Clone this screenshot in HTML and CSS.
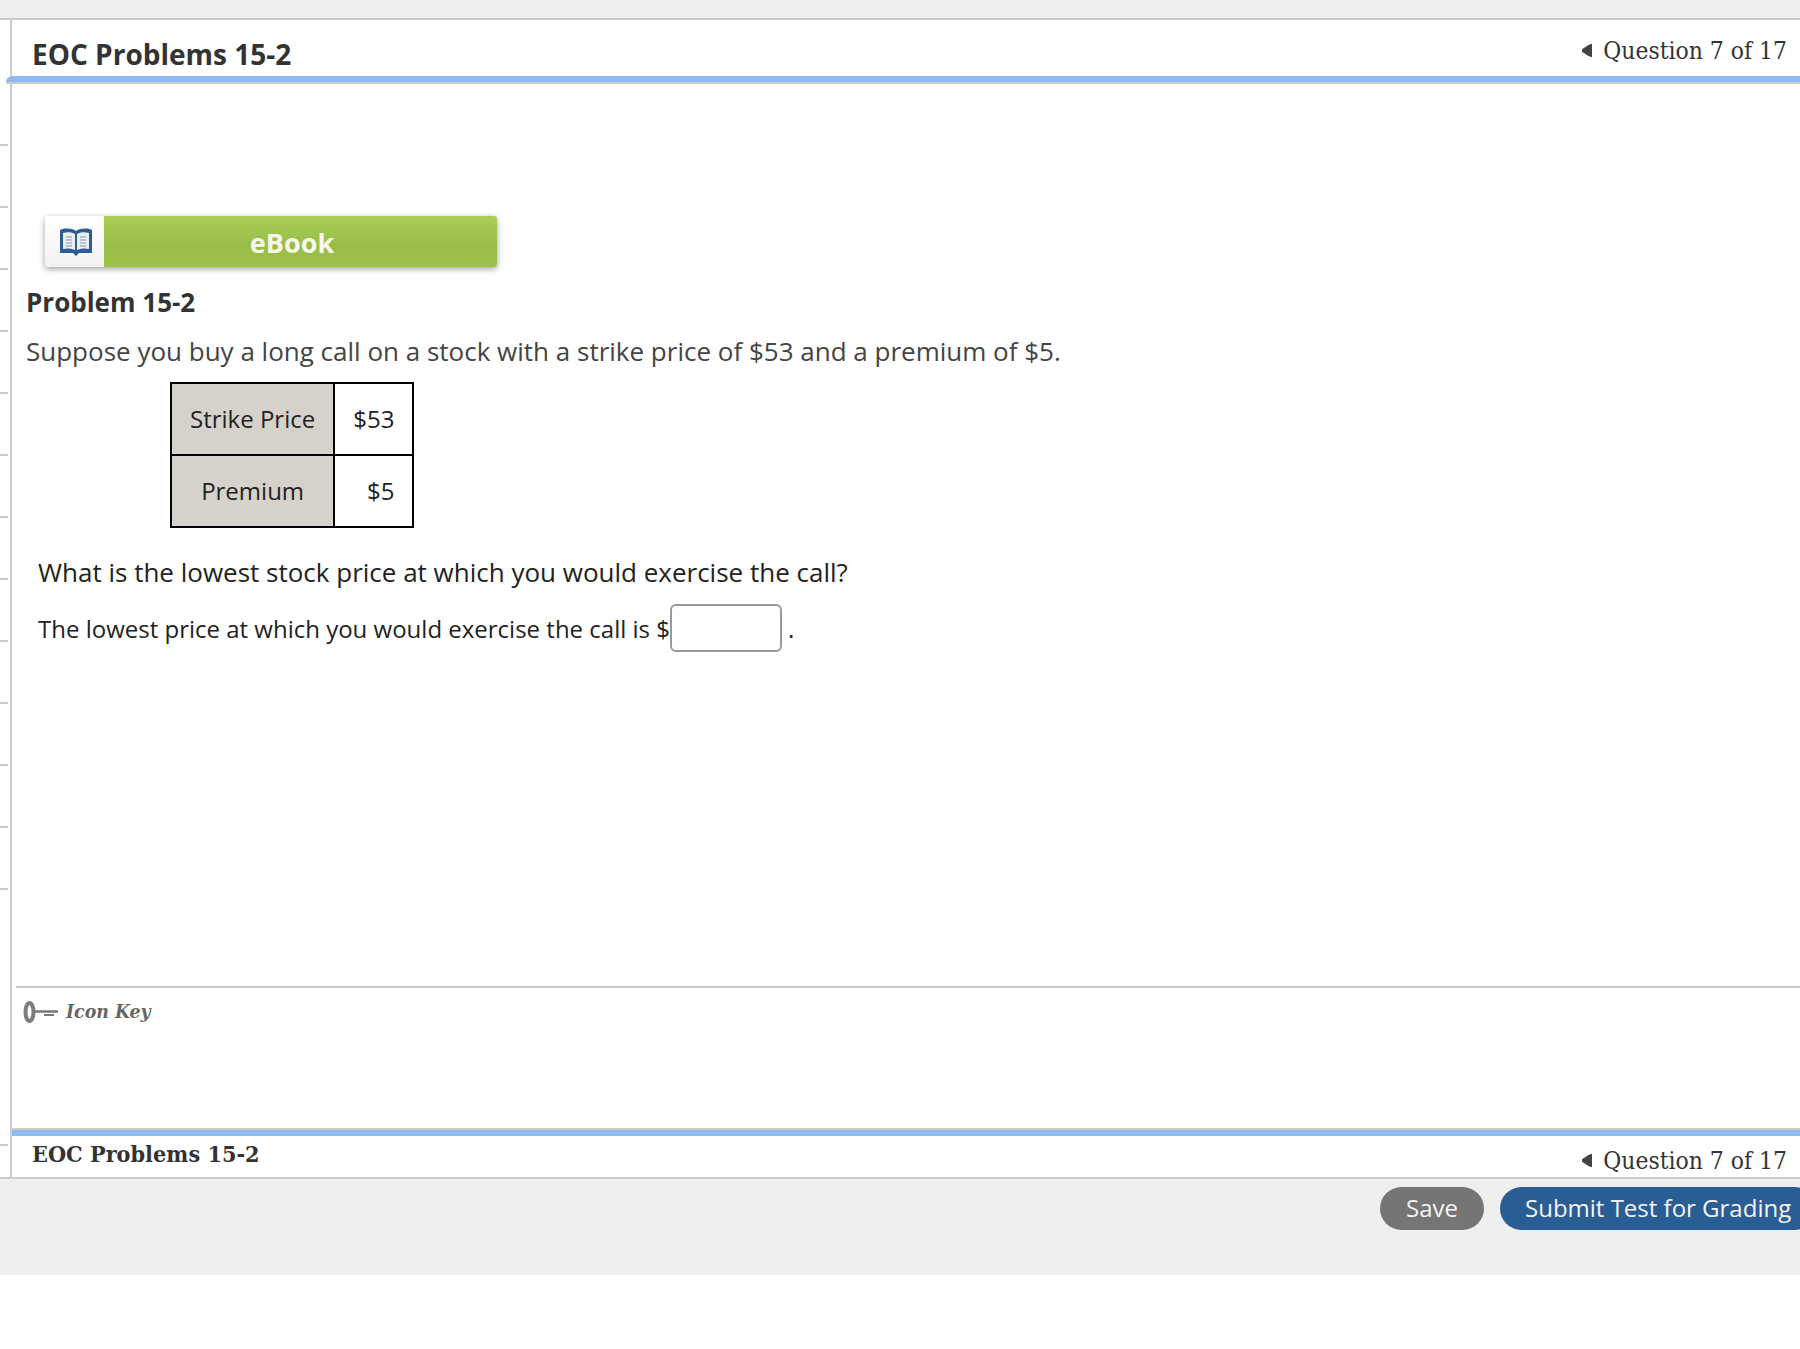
FILE: index.html
```html
<!DOCTYPE html>
<html lang="en">
<head>
<meta charset="utf-8">
<title>EOC Problems 15-2</title>
<link rel="stylesheet" href="styles.css">
</head>
<body>
<div class="page">
  <div class="band-top"></div>
  <div class="shell">
    <div class="rail">
      <i class="tick"></i><i class="tick"></i><i class="tick"></i><i class="tick"></i><i class="tick"></i>
      <i class="tick"></i><i class="tick"></i><i class="tick"></i><i class="tick"></i><i class="tick"></i>
      <i class="tick"></i><i class="tick"></i><i class="tick"></i>
      <i class="tick tick-last"></i>
    </div>
    <div class="main">
      <header class="head">
        <h1 class="title">EOC Problems 15-2</h1>
        <div class="qnav">
          <svg class="arrow" viewBox="0 0 11 15" width="10" height="15"><path d="M11 0V15L7 13.500L0 9V6L7 1.500Z"/></svg>
          <span>Question 7 of 17</span>
        </div>
      </header>
      <div class="rule-blue rule-head"></div>
      <section class="content">
        <div class="ebook">
          <span class="ebook-icon">
            <svg class="book" viewBox="0 0 34 30" width="34" height="30">
              <path d="M1 3c5-2 11-2 16 1 5-3 11-3 16-1v23H20l-3 3-3-3H1z" fill="#2b5c96"/>
              <path d="M4 6c4-1.500 9-1 12 1V23c-3-1.500-8-2-12-1z" fill="#eaeef3"/>
              <path d="M30 6c-4-1.500-9-1-12 1V23c3-1.500 8-2 12-1z" fill="#eaeef3"/>
              <path d="M7 10h6M7 13h6M7 16h6M7 19h6M21 10h6M21 13h6M21 16h6M21 19h6" stroke="#aab4c1" stroke-width="1.500" fill="none"/>
            </svg>
          </span>
          <span class="ebook-label">eBook</span>
        </div>
        <h2 class="problem">Problem 15-2</h2>
        <p class="intro">Suppose you buy a long call on a stock with a strike price of $53 and a premium of $5.</p>
        <table class="data">
          <tr><th>Strike Price</th><td>$53</td></tr>
          <tr><th>Premium</th><td>$5</td></tr>
        </table>
        <p class="ask">What is the lowest stock price at which you would exercise the call?</p>
        <p class="answer">The lowest price at which you would exercise the call is $<input class="field" type="text" aria-label="Lowest price"><span class="period">.</span></p>
      </section>
      <section class="key">
        <svg class="key-icon" viewBox="0 0 36 24" width="36" height="24">
          <ellipse cx="6.500" cy="11" rx="4" ry="9" fill="none" stroke="#7d7d7d" stroke-width="4"/>
          <path d="M12 10.500h23" stroke="#777" stroke-width="2.500"/>
          <path d="M21 14h10" stroke="#777" stroke-width="2"/>
        </svg>
        <span class="key-label">Icon Key</span>
      </section>
      <div class="rule-blue rule-foot"></div>
      <footer class="foot">
        <div class="foot-title">EOC Problems 15-2</div>
        <div class="qnav qnav-foot">
          <svg class="arrow" viewBox="0 0 11 15" width="10" height="15"><path d="M11 0V15L7 13.500L0 9V6L7 1.500Z"/></svg>
          <span>Question 7 of 17</span>
        </div>
      </footer>
    </div>
  </div>
  <div class="actions">
    <button class="btn btn-save" type="button">Save</button>
    <button class="btn btn-submit" type="button">Submit Test for Grading</button>
  </div>
</div>
</body>
</html>
```
FILE: styles.css
```css
* { box-sizing: border-box; }
html, body { margin: 0; padding: 0; background: #fff; }
body { font-family: "Open Sans", "Noto Sans", sans-serif; color: #333; }
.page { width: 1800px; height: 1349px; overflow: hidden; }

.band-top { height: 18px; background: #efefef; }

.shell {
  display: flex;
  height: 1161px;
  border-top: 2px solid #ccc;
  border-bottom: 2px solid #ccc;
}

.rail {
  width: 10px;
  flex: none;
  display: flex;
  flex-direction: column;
  gap: 60px;
  padding-top: 124px;
}
.tick { display: block; width: 8px; height: 2px; background: #ccc; flex: none; }
.tick-last { margin-top: 194px; }

.main {
  flex: 1;
  min-width: 0;
  display: flex;
  flex-direction: column;
  border-left: 2px solid #ccc;
}

.head {
  height: 56px;
  flex: none;
  display: flex;
  justify-content: space-between;
  padding: 0 13px 0 20px;
}
.title { margin: 0; padding-top: 16px; font-size: 28px; line-height: 36px; font-weight: 700; color: #333; }

.qnav {
  display: flex;
  align-items: center;
  gap: 11px;
  height: 36px;
  margin-top: 12px;
  font-family: "DejaVu Serif Condensed", "DejaVu Serif", serif;
  font-size: 24.400px;
  color: #333;
}
.arrow { fill: #444; flex: none; }

.rule-blue { flex: none; background: #8fbaf0; }
.rule-head {
  height: 8px;
  margin-left: -6px;
  border-bottom: 2px solid #ccc;
  border-top-left-radius: 6px;
}
.rule-foot { height: 8px; border-top: 2px solid #ccc; }

.content { height: 904px; flex: none; padding: 132px 0 0 9px; border-bottom: 2px solid #ccc; margin-left: 4px; }

.ebook {
  display: flex;
  width: 452px;
  height: 51px;
  margin-left: 20px;
  border-radius: 3px;
  box-shadow: 0 2px 6px rgba(0, 0, 0, 0.38);
}
.ebook-icon {
  width: 59px;
  flex: none;
  display: flex;
  align-items: center;
  justify-content: center;
  padding-left: 2px;
  background: linear-gradient(#fff, #f2f2f2);
  border-radius: 3px 0 0 3px;
}
.book { filter: blur(0.6px); }
.ebook-label {
  flex: 1;
  display: flex;
  align-items: center;
  justify-content: center;
  padding: 2px 17px 0 0;
  font-size: 27px;
  font-weight: 700;
  color: #f7f9ee;
  background: linear-gradient(#a9cf57, #98bd47 60%, #9dc24a);
  border-radius: 0 3px 3px 0;
}

.problem { margin: 18px 0 0 1px; font-size: 26px; line-height: 34px; font-weight: 700; color: #333; }
.intro { margin: 14px 0 0 1px; font-size: 26px; line-height: 36px; color: #444; }

.data {
  margin: 13px 0 0 145px;
  border-collapse: collapse;
  font-size: 24px;
  color: #222;
}
.data th, .data td { border: 2px solid #000; height: 72px; padding: 0 18px 2px; font-weight: 400; white-space: nowrap; }
.data th { width: 163px; background: #d6d2cb; text-align: center; }
.data td { width: 79px; text-align: right; background: #fff; }

.ask { margin: 26px 0 0 13px; font-size: 26px; line-height: 36px; color: #222; }
.answer {
  display: flex;
  align-items: center;
  margin: 14px 0 0 13px;
  font-size: 24px;
  line-height: 36px;
  color: #222;
}
.field {
  width: 112px;
  height: 48px;
  margin: 0 0 2px 0;
  border: 2px solid #999;
  border-radius: 6px;
  background: #fff;
}
.period { margin-left: 6px; }

.key {
  flex: 1;
  display: flex;
  align-items: flex-start;
  gap: 7px;
  padding: 11px 0 0 11px;
}
.key-label { font-family: "DejaVu Serif Condensed", "DejaVu Serif", serif; font-size: 19.300px; font-style: italic; font-weight: 700; color: #666; line-height: 26px; }
.key-icon { flex: none; margin-top: 2px; filter: blur(0.5px); }

.foot {
  height: 41px;
  flex: none;
  display: flex;
  justify-content: space-between;
  padding: 0 13px 0 20px;
}
.foot-title { font-family: "DejaVu Serif Condensed", "DejaVu Serif", serif; font-size: 23.200px; font-weight: 700; line-height: 32px; padding-top: 2px; color: #333; }
.qnav-foot { margin-top: 7px; height: 34px; }

.actions {
  height: 96px;
  background: #efefef;
  display: flex;
  justify-content: flex-end;
  align-items: flex-start;
  gap: 16px;
  padding-top: 8px;
  width: 1816px;
}
.btn {
  height: 43px;
  border: 0;
  border-radius: 22px;
  padding: 0 0 2px;
  font-family: "Open Sans", sans-serif;
  font-size: 24px;
  color: #f4f4f4;
}
.btn-save { width: 104px; background: #757575; }
.btn-submit { width: 316px; background: #2a5d94; text-align: left; padding-left: 25px; }
```
